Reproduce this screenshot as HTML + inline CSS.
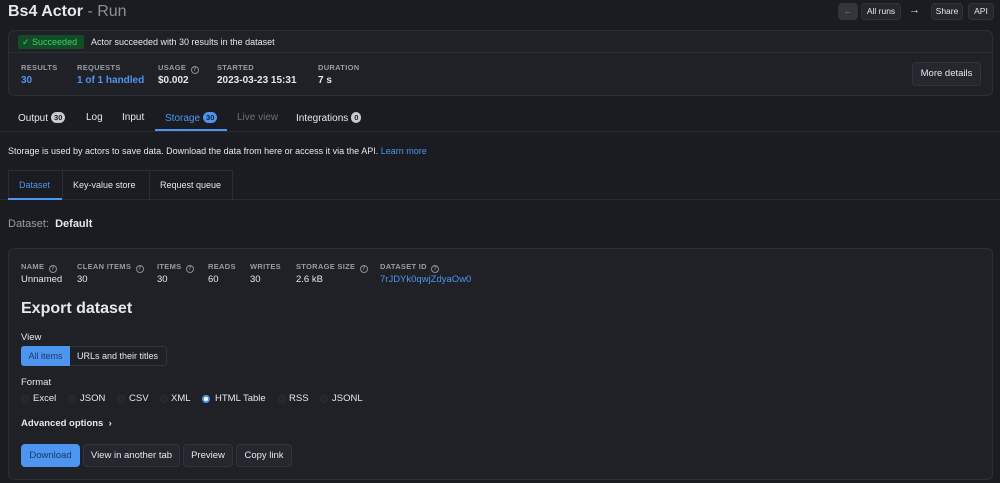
<!DOCTYPE html>
<html><head><style>
*{box-sizing:border-box;margin:0;padding:0}
body{width:1000px;height:483px;background:#1b1c21;color:#e6e7ea;font-family:"Liberation Sans",sans-serif;font-size:10px;position:relative;overflow:hidden}
.a{position:absolute;white-space:nowrap}
.lbl{font-size:7.5px;font-weight:bold;color:#9a9ca4;letter-spacing:.3px}
.q{display:inline-block;width:8px;height:8px;border:1px solid #8a8c94;border-radius:50%;font-size:6px;text-align:center;line-height:6px;vertical-align:-1px;margin-left:2px;color:#8a8c94}
.blue{color:#4d95ee}
.btn{position:absolute;background:#26272e;border:1px solid #33343b;border-radius:4px;font-size:9.5px;text-align:center;color:#e6e7ea}
.badge{display:inline-block;background:#c8cad0;color:#1b1c21;border-radius:7px;font-size:7.5px;font-weight:bold;padding:1px 3px;margin-left:3px;vertical-align:1px}
.r{position:absolute;width:8px;height:8px;border-radius:50%;background:#24252b;border:1px solid #2c2d33;top:395px}
.f{position:absolute;top:393px;font-size:9.5px}
</style></head><body>
<div class="a" style="left:8px;top:3px;font-size:16px;font-weight:bold">Bs4 Actor <span style="color:#8d8f97;font-weight:normal">- Run</span></div>
<div class="btn" style="left:838px;top:3px;width:20px;height:17px;background:#33353d;color:#7e8088;line-height:15px">←</div>
<div class="btn" style="left:861px;top:3px;width:40px;height:17px;line-height:15px;font-size:8.5px">All runs</div>
<div class="a" style="left:909px;top:4px;font-size:11px;font-weight:bold">→</div>
<div class="btn" style="left:931px;top:3px;width:32px;height:17px;line-height:15px;font-size:8.5px">Share</div>
<div class="btn" style="left:968px;top:3px;width:26px;height:17px;line-height:15px;font-size:8.5px">API</div>

<div class="a" style="left:8px;top:30px;width:985px;height:66px;background:#202127;border:1px solid #2d2e35;border-radius:6px"></div>
<div class="a" style="left:8px;top:52px;width:985px;height:1px;background:#2d2e35"></div>
<div class="a" style="left:18px;top:35px;width:66px;height:14px;background:#134d25;color:#3ed16b;border-radius:2px;font-size:9px;line-height:14px;padding-left:4px">✓ Succeeded</div>
<div class="a" style="left:91px;top:37px;font-size:9px">Actor succeeded with 30 results in the dataset</div>
<div class="a lbl" style="left:21px;top:63px">RESULTS</div>
<div class="a lbl" style="left:77px;top:63px">REQUESTS</div>
<div class="a lbl" style="left:158px;top:63px">USAGE <span class="q">?</span></div>
<div class="a lbl" style="left:217px;top:63px">STARTED</div>
<div class="a lbl" style="left:318px;top:63px">DURATION</div>
<div class="a blue" style="left:21px;top:75px;font-weight:bold">30</div>
<div class="a blue" style="left:77px;top:75px;font-weight:bold">1 of 1 handled</div>
<div class="a" style="left:158px;top:75px;font-weight:bold">$0.002</div>
<div class="a" style="left:217px;top:75px;font-weight:bold">2023-03-23 15:31</div>
<div class="a" style="left:318px;top:75px;font-weight:bold">7 s</div>
<div class="btn" style="left:912px;top:62px;width:69px;height:24px;line-height:22px">More details</div>

<div class="a" style="left:18px;top:112px">Output<span class="badge">30</span></div>
<div class="a" style="left:86px;top:112px">Log</div>
<div class="a" style="left:122px;top:112px">Input</div>
<div class="a blue" style="left:165px;top:112px">Storage<span class="badge" style="background:#4d95ee">30</span></div>
<div class="a" style="left:237px;top:112px;color:#6c6e76">Live view</div>
<div class="a" style="left:296px;top:112px">Integrations<span class="badge">0</span></div>
<div class="a" style="left:0;top:131px;width:1000px;height:1px;background:#2a2b31"></div>
<div class="a" style="left:155px;top:129px;width:72px;height:2px;background:#4d95ee"></div>

<div class="a" style="left:8px;top:146px;font-size:9px">Storage is used by actors to save data. Download the data from here or access it via the API. <span class="blue">Learn more</span></div>
<div class="a" style="left:8px;top:170px;width:225px;height:30px;border:1px solid #2d2e35;border-bottom:none"></div>
<div class="a" style="left:62px;top:170px;width:1px;height:30px;background:#2d2e35"></div>
<div class="a" style="left:149px;top:170px;width:1px;height:30px;background:#2d2e35"></div>
<div class="a" style="left:0;top:199px;width:1000px;height:1px;background:#2a2b31"></div>
<div class="a" style="left:8px;top:198px;width:54px;height:2px;background:#4d95ee"></div>
<div class="a blue" style="left:19px;top:180px;font-size:9px">Dataset</div>
<div class="a" style="left:73px;top:180px;font-size:9px">Key-value store</div>
<div class="a" style="left:160px;top:180px;font-size:9px">Request queue</div>
<div class="a" style="left:8px;top:218px;font-size:11px"><span style="color:#9a9ca4">Dataset:</span>&nbsp; <b>Default</b></div>

<div class="a" style="left:8px;top:248px;width:985px;height:232px;background:#202127;border:1px solid #2d2e35;border-radius:6px"></div>
<div class="a lbl" style="left:21px;top:262px">NAME <span class="q">?</span></div>
<div class="a lbl" style="left:77px;top:262px">CLEAN ITEMS <span class="q">?</span></div>
<div class="a lbl" style="left:157px;top:262px">ITEMS <span class="q">?</span></div>
<div class="a lbl" style="left:208px;top:262px">READS</div>
<div class="a lbl" style="left:250px;top:262px">WRITES</div>
<div class="a lbl" style="left:296px;top:262px">STORAGE SIZE <span class="q">?</span></div>
<div class="a lbl" style="left:380px;top:262px">DATASET ID <span class="q">?</span></div>
<div class="a" style="left:21px;top:274px;font-size:9.5px">Unnamed</div>
<div class="a" style="left:77px;top:274px;font-size:9.5px">30</div>
<div class="a" style="left:157px;top:274px;font-size:9.5px">30</div>
<div class="a" style="left:208px;top:274px;font-size:9.5px">60</div>
<div class="a" style="left:250px;top:274px;font-size:9.5px">30</div>
<div class="a" style="left:296px;top:274px;font-size:9.5px">2.6 kB</div>
<div class="a blue" style="left:380px;top:274px;font-size:9.5px">7rJDYk0qwjZdyaOw0</div>
<div class="a" style="left:21px;top:300px;font-size:16px;font-weight:bold">Export dataset</div>
<div class="a" style="left:21px;top:332px;font-size:9.5px">View</div>
<div class="a" style="left:21px;top:346px;width:146px;height:20px;border:1px solid #33343b;border-radius:3px"></div>
<div class="a" style="left:21px;top:346px;width:49px;height:20px;background:#4d95ee;border-radius:3px 0 0 3px;color:#1b3a66;font-size:9px;line-height:20px;text-align:center">All items</div>
<div class="a" style="left:77px;top:351px;font-size:9px">URLs and their titles</div>
<div class="a" style="left:21px;top:377px;font-size:9.5px">Format</div>
<div class="r" style="left:21px"></div><div class="f" style="left:33px">Excel</div>
<div class="r" style="left:68px"></div><div class="f" style="left:80px">JSON</div>
<div class="r" style="left:117px"></div><div class="f" style="left:129px">CSV</div>
<div class="r" style="left:160px"></div><div class="f" style="left:171px">XML</div>
<div class="r" style="left:202px;background:#fff;border:2.5px solid #4d95ee"></div><div class="f" style="left:215px">HTML Table</div>
<div class="r" style="left:278px"></div><div class="f" style="left:289px">RSS</div>
<div class="r" style="left:320px"></div><div class="f" style="left:332px">JSONL</div>
<div class="a" style="left:21px;top:418px;font-size:9.5px;font-weight:bold">Advanced options &nbsp;›</div>
<div class="btn" style="left:21px;top:444px;width:59px;height:23px;line-height:21px;background:#4d95ee;border-color:#4d95ee;color:#1b3a66">Download</div>
<div class="btn" style="left:83px;top:444px;width:97px;height:23px;line-height:21px">View in another tab</div>
<div class="btn" style="left:183px;top:444px;width:50px;height:23px;line-height:21px">Preview</div>
<div class="btn" style="left:236px;top:444px;width:56px;height:23px;line-height:21px">Copy link</div>
</body></html>
